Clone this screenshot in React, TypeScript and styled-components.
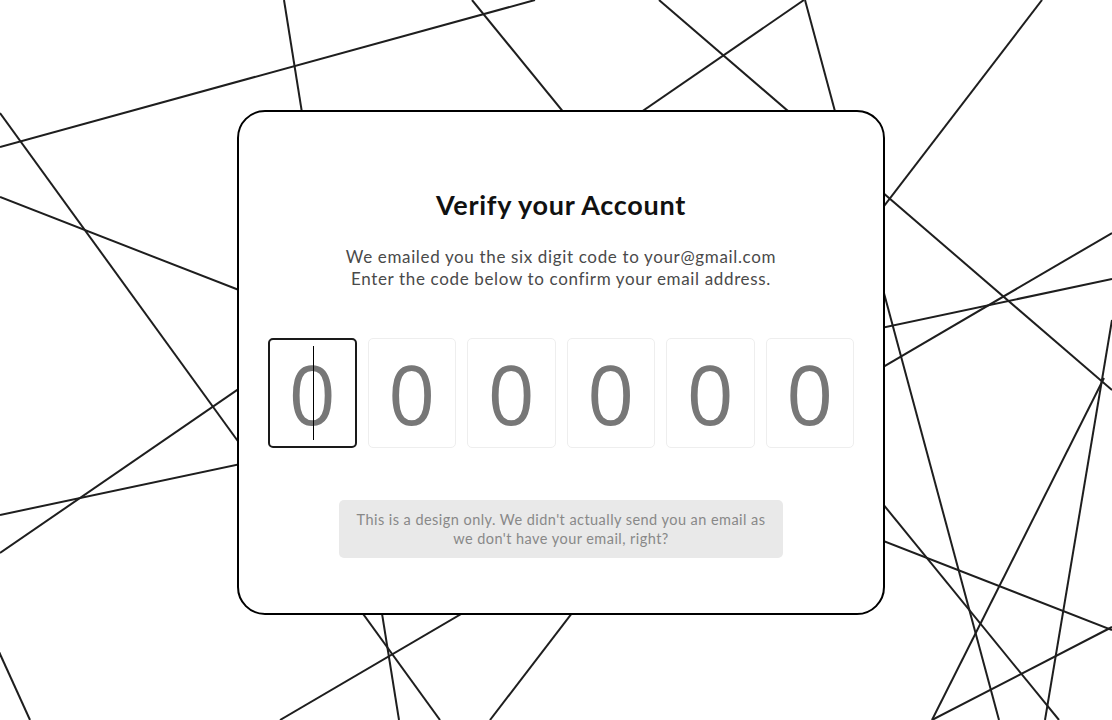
import styled, { createGlobalStyle } from "styled-components";

const GlobalStyle = createGlobalStyle`
  html, body {
    margin: 0;
    padding: 0;
    height: 100%;
    background: #fff;
  }
  body {
    font-family: Lato, "Open Sans", "Liberation Sans", sans-serif;
  }
`;

// background strokes: [x1, y1, x2, y2]
const lines: number[][] = [
  [0, 147, 535, 0],
  [284, 0, 399, 720],
  [472, 0, 1059, 720],
  [0, 113, 440, 720],
  [0, 197, 1112, 630],
  [0, 515, 1112, 279],
  [0, 553, 804, 0],
  [-20, 610, 30, 720],
  [280, 720, 1112, 233],
  [1042, 0, 490, 720],
  [659, 0, 1112, 390],
  [805, 0, 999, 720],
  [932, 720, 1104, 378],
  [1045, 720, 1112, 320],
  [932, 720, 1112, 627],
];

const DIGITS = 6;

const App = () => {
  return (
    <Page>
      <GlobalStyle />
      <Backdrop viewBox="0 0 1112 720" preserveAspectRatio="none">
        {lines.map(([x1, y1, x2, y2], i) => (
          <line key={i} x1={x1} y1={y1} x2={x2} y2={y2} />
        ))}
      </Backdrop>
      <Card>
        <Title>Verify your Account</Title>
        <Subtitle>
          We emailed you the six digit code to your@gmail.com
          <br />
          Enter the code below to confirm your email address.
        </Subtitle>
        <CodeRow>
          {Array.from({ length: DIGITS }).map((_, i) => (
            <Slot key={i} $active={i === 0}>
              <Digit type="text" maxLength={1} placeholder="0" readOnly />
              {i === 0 && <Caret />}
            </Slot>
          ))}
        </CodeRow>
        <Note>
          This is a design only. We didn't actually send you an email as
          <br />
          we don't have your email, right?
        </Note>
      </Card>
    </Page>
  );
};

const Page = styled.main`
  position: relative;
  min-height: 100vh;
  display: flex;
  align-items: center;
  justify-content: center;
  overflow: hidden;
`;
const Backdrop = styled.svg`
  position: absolute;
  inset: 0;
  width: 100%;
  height: 100%;
  stroke: #1e1e1e;
  stroke-width: 2;
  fill: none;
`;
const Card = styled.section`
  position: relative;
  z-index: 1;
  box-sizing: border-box;
  width: 648px;
  margin: 4px 0 0 10px;
  padding: 76px 0 55px;
  background: #fff;
  border: 2.5px solid #000;
  border-radius: 28px;
  display: flex;
  flex-direction: column;
  align-items: center;
`;
const Title = styled.h1`
  margin: 0;
  font-size: 27px;
  line-height: 34px;
  font-weight: 700;
  letter-spacing: 0.7px;
  color: #111;
`;
const Subtitle = styled.p`
  margin: 24px 0 0;
  font-size: 17px;
  line-height: 22px;
  letter-spacing: 0.65px;
  color: #4a4a4a;
  text-align: center;
`;
const CodeRow = styled.div`
  margin-top: 48px;
  display: flex;
  gap: 11px;
`;
const Slot = styled.div<{ $active?: boolean }>`
  position: relative;
  box-sizing: border-box;
  width: 88.5px;
  height: 110px;
  border-radius: 5px;
  border: ${(p) => (p.$active ? "2px solid #1a1a1a" : "1px solid #eeeeee")};
  display: flex;
`;
const Digit = styled.input`
  width: 100%;
  height: 100%;
  padding: 0;
  border: none;
  outline: none;
  background: transparent;
  text-align: center;
  font-family: "Open Sans", sans-serif;
  font-size: 82px;
  color: #777;
  caret-color: transparent;
  &::placeholder {
    color: #777;
    opacity: 1;
  }
`;
const Caret = styled.span`
  position: absolute;
  left: 43px;
  top: 6px;
  bottom: 6px;
  width: 1px;
  background: #000;
`;
const Note = styled.p`
  box-sizing: border-box;
  width: 444px;
  margin: 52px 0 0;
  padding: 10px 16px;
  background: #e9e9e9;
  border-radius: 5px;
  font-size: 14.5px;
  line-height: 19px;
  letter-spacing: 0.45px;
  color: #888;
  text-align: center;
`;

export default App;
